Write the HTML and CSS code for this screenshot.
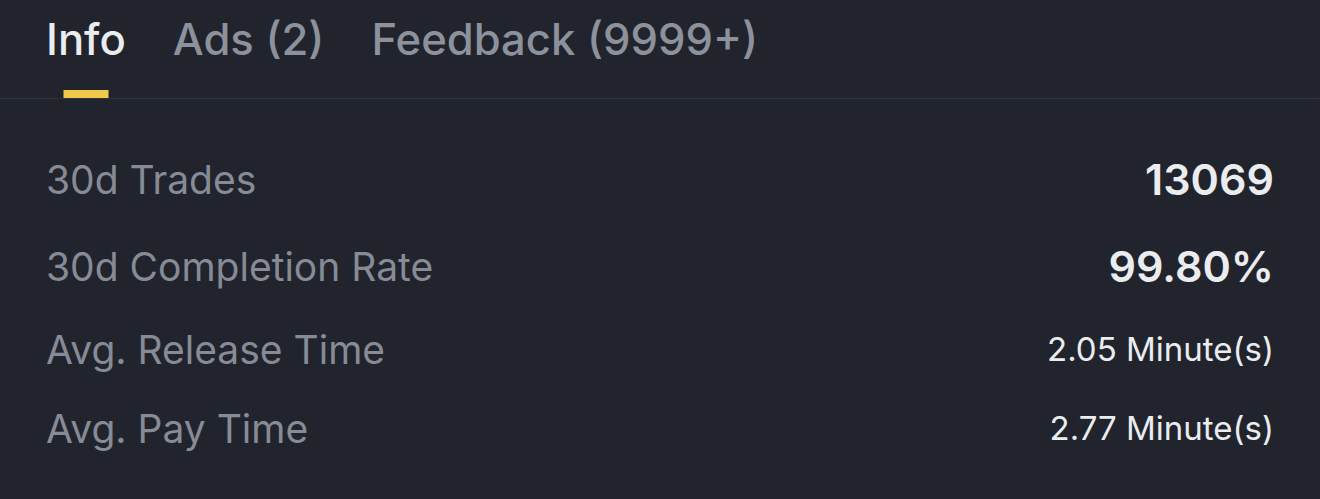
FILE: index.html
```html
<!DOCTYPE html>
<html>
<head>
<meta charset="utf-8">
<link rel="stylesheet" href="styles.css">
</head>
<body>
<div class="panel">
  <nav class="tabs">
    <div class="tab active">Info</div>
    <div class="tab">Ads (2)</div>
    <div class="tab">Feedback (9999+)</div>
  </nav>
  <div class="rows">
    <div class="row r1"><span class="label">30d Trades</span><span class="value big">13069</span></div>
    <div class="row r2"><span class="label">30d Completion Rate</span><span class="value big">99.80%</span></div>
    <div class="row r3"><span class="label">Avg. Release Time</span><span class="value">2.05 Minute(s)</span></div>
    <div class="row r4"><span class="label">Avg. Pay Time</span><span class="value">2.77 Minute(s)</span></div>
  </div>
</div>
</body>
</html>
```
FILE: styles.css
```css
* { box-sizing: border-box; }
html, body { margin: 0; padding: 0; }
body {
  background: #21242d;
  font-family: Inter, "Noto Sans", sans-serif;
  width: 1320px;
  height: 499px;
  overflow: hidden;
}
.panel { width: 1320px; }
.tabs {
  display: flex;
  gap: 47px;
  padding: 0 46px;
  height: 99px;
  border-bottom: 1px solid #30343e;
}
.tab {
  position: relative;
  font-size: 43.6px;
  font-weight: 500;
  color: #8c919c;
  padding-top: 12px;
  line-height: 56px;
}
.tab.active { color: #eaecef; }
.tab.active::after {
  content: "";
  position: absolute;
  left: 50%;
  transform: translateX(-50%);
  width: 45px;
  height: 8px;
  top: 90px;
  background: #f0c94a;
}
.rows { padding: 0 46px 0 46px; }
.row {
  display: flex;
  justify-content: space-between;
  align-items: center;
}
.r1 { margin-top: 52px; height: 56px; }
.r2 { margin-top: 31px; height: 56px; }
.r3 { margin-top: 27px; height: 56px; }
.r4 { margin-top: 23px; height: 56px; }
.label { font-size: 39px; color: #868b96; }
.value { font-size: 33px; color: #eaecef; }
.value.big { font-size: 43px; font-weight: 600; }
```
